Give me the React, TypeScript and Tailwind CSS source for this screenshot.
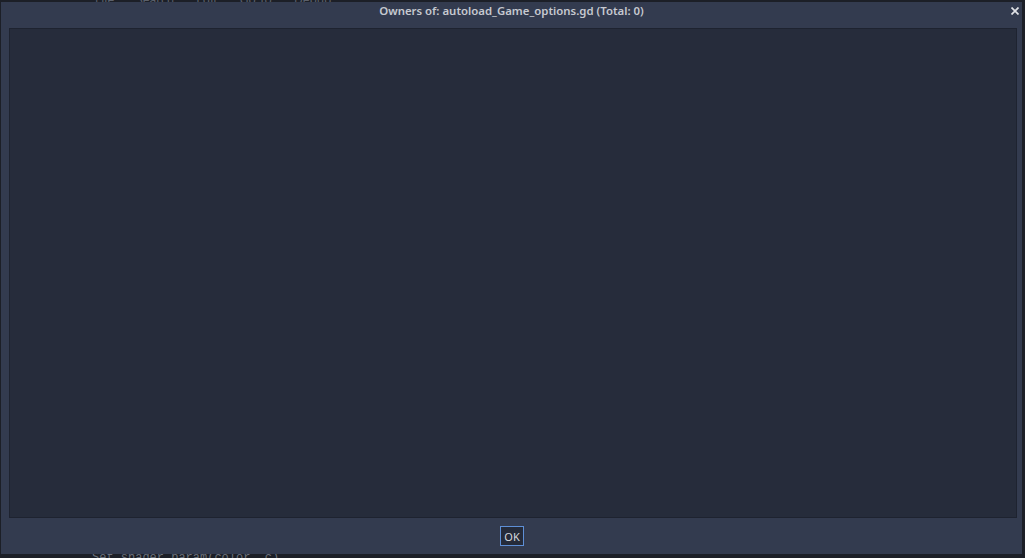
import React from "react";

// Modal listing the owners of a resource, drawn over a dimmed editor.
export default function App() {
  return (
    <div
      className="relative w-[1025px] h-[558px] overflow-hidden bg-[#1c1f27]"
      style={{ fontFamily: '"Noto Sans", "Open Sans", sans-serif' }}
    >
      {/* editor behind the dialog, mostly hidden */}
      <div className="absolute left-[95px] top-[-9px] flex gap-[22px] text-[12px] text-[#5b606b]">
        <span>File</span>
        <span>Search</span>
        <span>Edit</span>
        <span>Go To</span>
        <span>Debug</span>
      </div>
      <div className="absolute left-[92px] top-[549px] text-[12px] text-[#6b707a] font-mono">
        Set shader param(color, c)
      </div>

      {/* dialog window */}
      <div className="absolute left-[1px] top-[2px] w-[1021px] h-[552px] bg-[#333b4f] flex flex-col">
        <div className="relative h-[19px] flex items-center justify-center">
          <span className="text-[11.4px] font-semibold text-[#c6c9d0] leading-none pb-[2px]">
            Owners of: autoload_Game_options.gd (Total: 0)
          </span>
          <svg
            className="absolute right-[3px] top-[5px]"
            width="8"
            height="8"
            viewBox="0 0 8 8"
          >
            <path d="M0.5 0.5L7.5 7.5M7.5 0.5L0.5 7.5" stroke="#e0e2e6" strokeWidth="1.7" />
          </svg>
        </div>
        <div className="ml-[8px] mr-[5px] mt-[7px] h-[490px] bg-[#262c3b] border border-[#1e2330]" />
        <div className="flex justify-center pt-[8px] pl-[1px]">
          <button className="w-[24px] h-[20px] border border-[#5e8fd6] bg-[#252b3a] text-[11px] text-[#d6d8dd] leading-none flex items-center justify-center">
            OK
          </button>
        </div>
      </div>
    </div>
  );
}
